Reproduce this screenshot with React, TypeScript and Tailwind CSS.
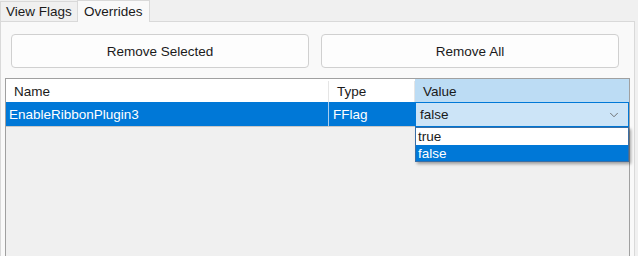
import { ChevronDown } from "lucide-react";

const font = { fontFamily: '"Liberation Sans", Arial, sans-serif' };

function Tab({ label, active }: { label: string; active?: boolean }) {
  if (active) {
    return (
      <div className="relative z-10 -mb-px flex h-[22px] w-[73px] items-center border-x border-t border-[#d9d9d9] bg-[#f9f9f9] pl-[6px] pt-[1px] text-[#1a1a1a]">
        {label}
      </div>
    );
  }
  return (
    <div className="flex h-[20px] w-[77px] items-center border-l border-t border-[#d9d9d9] bg-[#f0f0f0] pl-[5px] pt-[1px] text-[#1a1a1a]">
      {label}
    </div>
  );
}

function Button({ label }: { label: string }) {
  return (
    <button className="flex h-[34px] w-[298px] items-center justify-center rounded-[4px] border border-[#d0d0d0] bg-[#fdfdfd] pt-[1px] text-[#1a1a1a]">
      {label}
    </button>
  );
}

export default function App() {
  return (
    <div
      className="h-[256px] w-[638px] overflow-hidden bg-[#f0f0f0] text-[13.5px] leading-none"
      style={font}
    >
      <div className="flex h-[21px] items-end">
        <Tab label="View Flags" />
        <Tab label="Overrides" active />
      </div>

      <div className="h-[240px] w-[635px] border border-[#d9d9d9] bg-[#f9f9f9] px-[4px] pt-[12px]">
        <div className="flex gap-[12px] px-[6px]">
          <Button label="Remove Selected" />
          <Button label="Remove All" />
        </div>

        <div className="mt-[10px] h-[200px] w-[625px] border border-[#a0a0a0] bg-[#f0f0f0]">
          {/* header */}
          <div className="flex h-[23px] bg-white pt-[2px]">
            <div className="flex w-[323px] items-center border-r border-[#e5e5e5] pl-[8px] text-[#1a1a1a]">Name</div>
            <div className="flex w-[86px] items-center border-r border-[#e5e5e5] pl-[8px] text-[#1a1a1a]">Type</div>
            <div className="-mt-[2px] flex flex-1 items-center bg-[#bcdcf4] pl-[8px] pt-[2px] text-[#1a1a1a]">Value</div>
          </div>

          {/* selected row */}
          <div className="relative flex h-[25px] border-b border-[#c8c8c8] bg-[#0078d7] text-white">
            <div className="flex w-[323px] items-center border-r border-[#a9cdef] pl-[3px] pt-[2px]">EnableRibbonPlugin3</div>
            <div className="flex w-[86px] items-center pl-[4px] pt-[2px]">FFlag</div>
            <div className="relative flex-1">
              <div className="flex h-[25px] items-center justify-between border border-[#0078d7] bg-[#cce4f7] pl-[4px] pr-[7px] pt-[1px] text-[#1a1a1a]">
                <span>false</span>
                <ChevronDown className="h-[14px] w-[14px] text-[#606060]" strokeWidth={1.5} />
              </div>
              <div className="absolute left-0 top-[25px] z-20 w-[214px] border border-[#3a6ea5] bg-white shadow-[2px_2px_3px_rgba(0,0,0,0.35)]">
                <div className="flex h-[17px] items-center pl-[2px] pt-[1px] text-[#1a1a1a]">true</div>
                <div className="flex h-[16px] items-center bg-[#0078d7] pl-[2px] pt-[1px] text-white">false</div>
              </div>
            </div>
          </div>
        </div>
      </div>
    </div>
  );
}
